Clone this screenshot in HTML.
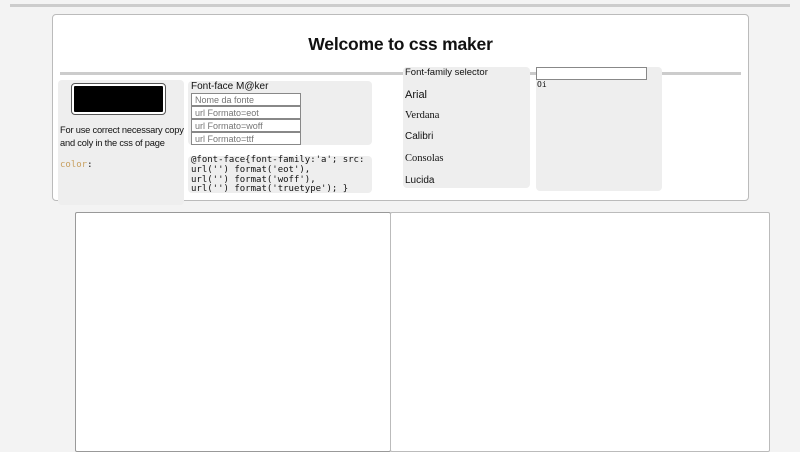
<!DOCTYPE html>
<html><head><style>
*{margin:0;padding:0;box-sizing:border-box}
body{width:800px;height:450px;background:#f3f3f3;position:relative;overflow:hidden;font-family:"Liberation Sans",sans-serif;color:#111}
.a{position:absolute}
.g{background:#eeeeee;border-radius:4px}
input{position:absolute;height:13px;border:1px solid #888;background:#fff;font:9px "Liberation Sans",sans-serif;color:#999;padding-left:3px}
.mono{font-family:"DejaVu Sans Mono","Liberation Mono",monospace}
</style></head><body>
<div class="a" style="left:10px;top:4px;width:780px;height:3px;background:#ccc"></div>
<div class="a" style="left:52px;top:14px;width:697px;height:187px;background:#fff;border:1px solid #bbb;border-radius:4px"></div>
<div class="a" style="left:52px;top:34px;width:697px;text-align:center;font-size:17.5px;font-weight:bold;letter-spacing:-0.2px">Welcome to css maker</div>
<div class="a" style="left:60px;top:72px;width:681px;height:3px;background:#ccc"></div>
<div class="a g" style="left:58px;top:80px;width:126px;height:125px"></div>
<div class="a" style="left:72px;top:84px;width:93px;height:30px;background:#000;border:2px solid #fff;outline:1px solid #555;border-radius:3px"></div>
<div class="a" style="left:60px;top:124px;font-size:9.3px;line-height:13px;width:130px;letter-spacing:-0.2px">For use correct necessary copy<br>and coly in the css of page</div>
<div class="a mono" style="left:60px;top:160px;font-size:9px"><span style="color:#c8a060">color</span>:</div>
<div class="a g" style="left:188px;top:81px;width:184px;height:64px"></div>
<div class="a" style="left:191px;top:81px;font-size:10px">Font-face M@ker</div>
<input style="left:191px;top:93px;width:110px" placeholder="Nome da fonte">
<input style="left:191px;top:106px;width:110px" placeholder="url Formato=eot">
<input style="left:191px;top:119px;width:110px" placeholder="url Formato=woff">
<input style="left:191px;top:132px;width:110px" placeholder="url Formato=ttf">
<div class="a g" style="left:188px;top:156px;width:184px;height:37px"></div>
<div class="a mono" style="left:191px;top:156px;font-size:9px;line-height:9.8px;white-space:pre">@font-face{font-family:'a'; src:
url('') format('eot'),
url('') format('woff'),
url('') format('truetype'); }</div>
<div class="a g" style="left:403px;top:67px;width:127px;height:121px"></div>
<div class="a" style="left:405px;top:67px;font-size:9.5px">Font-family selector</div>
<div class="a" style="left:405px;top:89px;font-size:11px">Arial</div>
<div class="a" style="left:405px;top:110px;font-size:10.5px;font-family:'Liberation Serif',serif">Verdana</div>
<div class="a" style="left:405px;top:131px;font-size:10px">Calibri</div>
<div class="a" style="left:405px;top:153px;font-size:10.5px;font-family:'Liberation Serif',serif">Consolas</div>
<div class="a" style="left:405px;top:175px;font-size:10px">Lucida</div>
<div class="a g" style="left:536px;top:67px;width:126px;height:124px"></div>
<input style="left:536px;top:67px;width:111px">
<div class="a mono" style="left:537px;top:80px;font-size:8px">Oi</div>
<div class="a" style="left:75px;top:212px;width:316px;height:240px;background:#fff;border:1px solid #999;border-radius:2px"></div>
<div class="a" style="left:390px;top:212px;width:380px;height:240px;background:#fff;border:1px solid #bbb;border-radius:2px"></div>
</body></html>
